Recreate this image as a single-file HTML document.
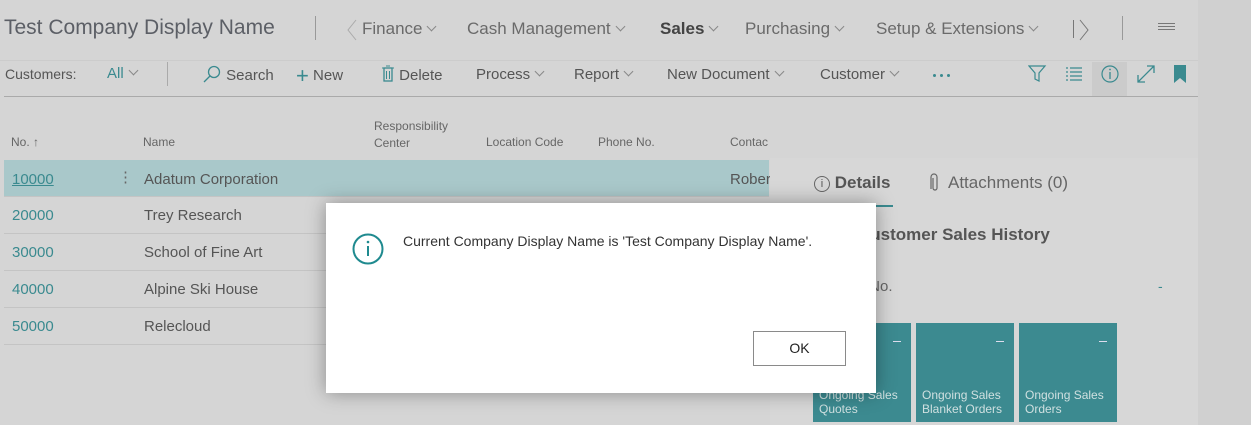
<!DOCTYPE html>
<html><head><meta charset="utf-8"><style>
*{box-sizing:border-box;margin:0;padding:0}
body{width:1251px;height:425px;overflow:hidden;background:#d5d5d5;font-family:"Liberation Sans",sans-serif;color:#555;position:relative}
.a{position:absolute;white-space:nowrap}
.teal{color:#3a8a8f}
.chev{display:inline-block;width:7px;height:7px;border-right:1px solid #888;border-bottom:1px solid #888;transform:rotate(45deg);margin:0 0 4px 6px}
.hdr{font-size:12px;color:#666}
.row{position:absolute;left:4px;width:765px;height:37px;border-bottom:1px solid #c4c4c4;font-size:15px}
.row span{position:absolute;top:10px}
.tile{position:absolute;top:323px;width:98px;height:99px;background:#3c8a90;color:#cfe0e0;font-size:12px}
.tile .d{position:absolute;right:10px;top:18px;width:8px;border-top:1px solid #dde}
.tile .t{position:absolute;left:6px;bottom:6px;line-height:14px}
.dot{position:absolute;top:74px;width:3px;height:3px;background:#3a8a8f;border-radius:50%}
</style></head><body>
<div class="a" style="left:4px;top:16px;font-size:21px;color:#5c5f66">Test Company Display Name</div>
<div class="a" style="left:315px;top:16px;width:1px;height:24px;background:#999"></div>
<svg class="a" style="left:346px;top:19px" width="12" height="22"><path d="M10 1L2 11l8 10" fill="none" stroke="#aaa" stroke-width="1"/></svg>
<div class="a" style="left:362px;top:19px;font-size:17px;color:#6a6a6a">Finance<span class="chev"></span></div>
<div class="a" style="left:467px;top:19px;font-size:17px;color:#6a6a6a">Cash Management<span class="chev"></span></div>
<div class="a" style="left:660px;top:19px;font-size:17px;color:#444;font-weight:bold">Sales<span class="chev"></span></div>
<div class="a" style="left:745px;top:19px;font-size:17px;color:#6a6a6a">Purchasing<span class="chev"></span></div>
<div class="a" style="left:876px;top:19px;font-size:17px;color:#6a6a6a">Setup &amp; Extensions<span class="chev"></span></div>
<div class="a" style="left:1073px;top:20px;width:1px;height:18px;background:#777"></div>
<svg class="a" style="left:1078px;top:19px" width="12" height="22"><path d="M2 1l8 10-8 10" fill="none" stroke="#777" stroke-width="1"/></svg>
<div class="a" style="left:1122px;top:16px;width:1px;height:24px;background:#999"></div>
<div class="a" style="left:1158px;top:23px;width:17px;height:7px;border-top:1px solid #777;border-bottom:1px solid #777"></div>
<div class="a" style="left:1158px;top:26px;width:17px;height:1px;background:#777"></div>
<div class="a" style="left:0;top:60px;width:1198px;height:1px;background:#ccc"></div>

<div class="a" style="left:5px;top:66px;font-size:14px;color:#555">Customers:</div>
<div class="a teal" style="left:107px;top:65px;font-size:15px">All<span class="chev"></span></div>
<div class="a" style="left:167px;top:62px;width:1px;height:24px;background:#aaa"></div>
<div class="a" style="left:202px;top:65px;font-size:15px;color:#555"><svg width="20" height="18" style="vertical-align:-3px"><circle cx="12" cy="7" r="5.5" fill="none" stroke="#3a8a8f" stroke-width="1.3"/><path d="M8 11 L2 17" stroke="#3a8a8f" stroke-width="1.3"/></svg> Search</div>
<div class="a" style="left:296px;top:63px;font-size:15px;color:#555"><span class="teal" style="font-size:22px;vertical-align:-3px">+</span> New</div>
<div class="a" style="left:381px;top:65px;font-size:15px;color:#555"><svg width="14" height="18" style="vertical-align:-3px"><rect x="3" y="3" width="8" height="13" fill="none" stroke="#3a8a8f" stroke-width="1.3"/><path d="M1 3h12M5 1h4M5.5 6v8M8.5 6v8" stroke="#3a8a8f"/></svg> Delete</div>
<div class="a" style="left:476px;top:66px;font-size:15px">Process<span class="chev"></span></div>
<div class="a" style="left:574px;top:66px;font-size:15px">Report<span class="chev"></span></div>
<div class="a" style="left:667px;top:66px;font-size:15px">New Document<span class="chev"></span></div>
<div class="a" style="left:820px;top:66px;font-size:15px">Customer<span class="chev"></span></div>
<div class="dot" style="left:933px"></div><div class="dot" style="left:940px"></div><div class="dot" style="left:947px"></div>
<svg class="a" style="left:1028px;top:64px" width="20" height="20"><path d="M1 2h16l-6 7v8l-4-2V9z" fill="none" stroke="#3a8a8f" stroke-width="1.2"/></svg>
<svg class="a" style="left:1065px;top:66px" width="18" height="16"><path d="M1 2h2M5 2h12M1 6h2M5 6h12M1 10h2M5 10h12M1 14h2M5 14h12" stroke="#3a8a8f" stroke-width="1.3"/></svg>
<div class="a" style="left:1092px;top:62px;width:35px;height:34px;background:#cbcbcb"></div>
<svg class="a" style="left:1100px;top:64px" width="20" height="20"><circle cx="10" cy="10" r="8" fill="none" stroke="#3a8a8f" stroke-width="1.2"/><path d="M10 8v7" stroke="#3a8a8f" stroke-width="1.3"/><circle cx="10" cy="5.5" r="0.9" fill="#3a8a8f"/></svg>
<svg class="a" style="left:1136px;top:64px" width="20" height="20"><path d="M2 18L18 2M11 2h7v7M2 11v7h7" fill="none" stroke="#3a8a8f" stroke-width="1.3"/></svg>
<svg class="a" style="left:1173px;top:64px" width="14" height="20"><path d="M1 1h12v18l-6-5-6 5z" fill="#3a8a8f"/></svg>
<div class="a" style="left:4px;top:96px;width:1194px;height:1px;background:#aaa"></div>

<div class="a hdr" style="left:11px;top:135px">No. ↑</div>
<div class="a hdr" style="left:143px;top:135px">Name</div>
<div class="a hdr" style="left:374px;top:118px;line-height:17px">Responsibility<br>Center</div>
<div class="a hdr" style="left:486px;top:135px">Location Code</div>
<div class="a hdr" style="left:598px;top:135px">Phone No.</div>
<div class="a hdr" style="left:730px;top:135px">Contac</div>

<div class="row" style="top:160px;background:#a9c8ca"><span class="teal" style="left:8px;top:11px;text-decoration:underline">10000</span><span style="left:114px;top:8px;color:#666">⋮</span><span style="left:140px;top:11px">Adatum Corporation</span><span style="left:726px;top:11px">Rober</span></div>
<div class="row" style="top:197px"><span class="teal" style="left:8px">20000</span><span style="left:140px">Trey Research</span></div>
<div class="row" style="top:234px"><span class="teal" style="left:8px">30000</span><span style="left:140px">School of Fine Art</span></div>
<div class="row" style="top:271px"><span class="teal" style="left:8px">40000</span><span style="left:140px">Alpine Ski House</span></div>
<div class="row" style="top:308px"><span class="teal" style="left:8px">50000</span><span style="left:140px">Relecloud</span></div>

<div class="a" style="left:770px;top:158px;width:428px;height:267px;background:#d7d7d7"></div>
<div class="a" style="left:1198px;top:0;width:53px;height:425px;background:#d0d0d0"></div>
<div class="a" style="left:814px;top:173px;font-size:17px;color:#555"><span style="display:inline-block;width:16px;height:16px;border:1px solid #666;border-radius:50%;font-size:11px;text-align:center;line-height:14px;vertical-align:1px">i</span> <b>Details</b></div>
<div class="a" style="left:813px;top:205px;width:80px;height:2px;background:#3a8a8f"></div>
<svg class="a" style="left:929px;top:173px" width="12" height="20"><path d="M4 5v10a2 2 0 0 0 4 0V4a3 3 0 0 0-6 0v12" fill="none" stroke="#666" stroke-width="1.2"/></svg>
<div class="a" style="left:948px;top:173px;font-size:17px;color:#666">Attachments (0)</div>
<div class="a" style="left:858px;top:225px;font-size:17px;font-weight:bold;color:#555">Customer Sales History</div>
<div class="a" style="left:860px;top:278px;font-size:15px;color:#666">r No.</div>
<div class="a teal" style="left:1158px;top:278px;font-size:14px">-</div>
<div class="tile" style="left:813px"><div class="d"></div><div class="t">Ongoing Sales<br>Quotes</div></div>
<div class="tile" style="left:916px"><div class="d"></div><div class="t">Ongoing Sales<br>Blanket Orders</div></div>
<div class="tile" style="left:1019px"><div class="d"></div><div class="t">Ongoing Sales<br>Orders</div></div>

<div class="a" style="left:326px;top:203px;width:550px;height:190px;background:#fff;box-shadow:0 0 18px rgba(0,0,0,0.35)">
<svg class="a" style="left:26px;top:30px" width="32" height="32"><circle cx="16" cy="16" r="14.5" fill="none" stroke="#1f8a8f" stroke-width="2"/><path d="M16 13v10" stroke="#1f8a8f" stroke-width="2"/><circle cx="16" cy="9" r="1.3" fill="#1f8a8f"/></svg>
<div class="a" style="left:77px;top:30px;font-size:14px;color:#333">Current Company Display Name is 'Test Company Display Name'.</div>
<div class="a" style="left:427px;top:128px;width:93px;height:35px;border:1px solid #8a8a8a;text-align:center;line-height:33px;font-size:14px;color:#222">OK</div>
</div>
</body></html>
